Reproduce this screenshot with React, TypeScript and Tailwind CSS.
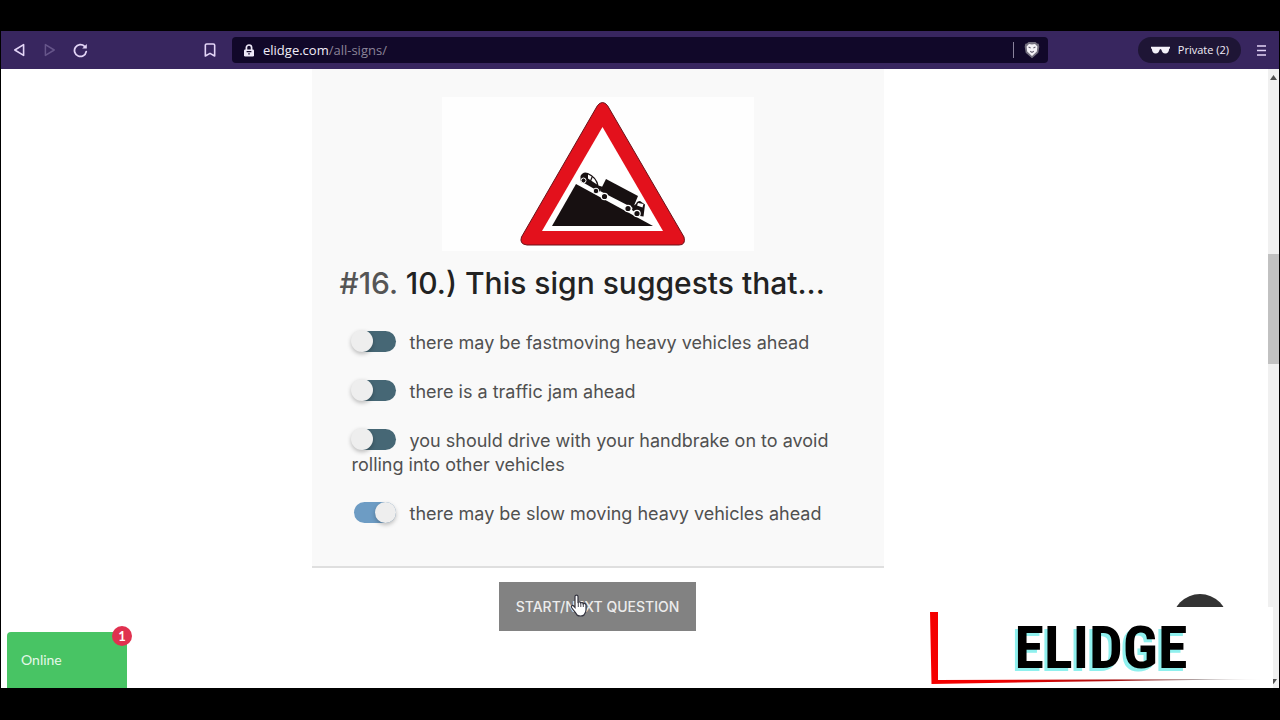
import { Bookmark } from "lucide-react";

const answers = [
  { id: "a1", text: "there may be fastmoving heavy vehicles ahead", checked: false },
  { id: "a2", text: "there is a traffic jam ahead", checked: false },
  {
    id: "a3",
    text: "you should drive with your handbrake on to avoid rolling into other vehicles",
    checked: false,
  },
  { id: "a4", text: "there may be slow moving heavy vehicles ahead", checked: true },
];

function Toolbar() {
  return (
    <header className="flex h-[38px] items-center bg-[#38265f] font-['Open_Sans','Noto_Sans',sans-serif] text-[#e3d5f7]">
      <nav className="flex flex-1 items-center pl-3">
        <button type="button" aria-label="Back" className="w-[31px]">
          <svg width="12" height="14" viewBox="0 0 12 14" fill="none" stroke="currentColor" strokeWidth="1.6" strokeLinejoin="round">
            <path d="M10.6 1.6v10.8L1.8 7z" />
          </svg>
        </button>
        <button type="button" aria-label="Forward" disabled className="w-[29px] text-[#66558a]">
          <svg width="12" height="14" viewBox="0 0 12 14" fill="none" stroke="currentColor" strokeWidth="1.5" strokeLinejoin="round">
            <path d="M1.4 1.6v10.8L10.2 7z" />
          </svg>
        </button>
        <button type="button" aria-label="Reload">
          <svg width="15" height="15" viewBox="0 0 15 15" fill="none" stroke="currentColor" strokeWidth="1.8" strokeLinecap="round">
            <path d="M13.2 8.6A5.9 5.9 0 1 1 11.6 3.4" />
            <path d="M9.2 5.6h4.6V1z" fill="currentColor" stroke="none" />
          </svg>
        </button>
        <button type="button" aria-label="Bookmark" className="ml-[114px]">
          <Bookmark className="h-4 w-4" strokeWidth={2.4} />
        </button>
        <div className="ml-3.5 flex h-[26px] flex-1 items-center rounded-sm bg-[#110829] pr-2 pl-[11px]">
          <svg width="12" height="13" viewBox="0 0 12 13" fill="none">
            <path d="M3.4 6V3.6a2.6 2.6 0 0 1 5.2 0V6" stroke="#eee9f8" strokeWidth="1.7" />
            <rect x="1" y="5.4" width="10" height="7" rx="1.2" fill="#eee9f8" />
            <path d="M3.6 7.6h4.8M5.2 9.8h1.6" stroke="#110829" strokeWidth="1.2" />
          </svg>
          <p className="ml-2 flex-1 text-[13px] leading-5 text-[#8b8498]">
            <span className="text-[#f1edf7]">elidge.com</span>/all-signs/
          </p>
          <div className="mr-2.5 h-4 w-px bg-[#8a829c]" />
          <svg width="16" height="18" viewBox="0 0 16 18">
            <path d="M4.5 1h7l1.6 1.5 1.6.2.6 3-1 6.1L8 17.2l-6.3-5.4-1-6.1.6-3 1.6-.2z" fill="#74707f" />
            <path d="M5 3l3 .6L11 3l2.4 2.4-.6 5L8 15l-4.8-4.600-.6-5z" fill="#f4f2f7" />
            <path d="M4.6 6.1l2 .8M11.4 6.1l-2 .8M6.2 10.2L8 11.4l1.8-1.2" stroke="#5f5a6b" strokeWidth="1.1" fill="none" />
          </svg>
        </div>
      </nav>
      <div className="ml-[90px] flex h-[26px] items-center gap-2 rounded-full bg-[#1e1535] pr-3 pl-[13px]">
        <svg width="19" height="9" viewBox="0 0 19 9" fill="#f4f1fa">
          <path d="M0 .8h19v1.4l-.9.7c0 2.700-1.400 4.600-3.800 4.600-2.200 0-3.400-1.500-3.900-3.800L9.500 3l-.9.7C8.100 6 6.900 7.500 4.700 7.500 2.300 7.500.9 5.600.9 2.900L0 2.200z" />
        </svg>
        <span className="text-[11px] leading-4 text-[#f1edf7]">Private (2)</span>
      </div>
      <button type="button" aria-label="Menu" className="mr-3 ml-[15px]">
        <svg width="11" height="13" viewBox="0 0 11 13" stroke="currentColor" strokeWidth="1.5">
          <path d="M1 2h9M1 6.5h9M1 11h9" />
        </svg>
      </button>
    </header>
  );
}

function SteepHillSign() {
  return (
    <svg width="312" height="154" viewBox="442 97 312 154" className="mx-auto bg-[#fefefe]" role="img" aria-label="Steep hill warning sign">
      <path
        d="M597.5 105.500Q602.500 99.500 607.500 105.500L684 237Q686 245 679 245H527Q519 244 521.500 237Z"
        fill="#e3111c"
        stroke="#6b1118"
        strokeWidth="1"
      />
      <path d="M602.5 127L663 231H542Z" fill="#fff" />
      <path d="M576 184L653 226H552Z" fill="#171011" />
      {/* truck and trailer */}
      <path d="M606 179L638 196L633 208L600 191Z" fill="#171011" />
      <path d="M636 204Q637 201 640 201L645 204.500L643.500 216.500L640 216L632 210L633 206Z" fill="#171011" />
      <path d="M638 203L643.500 204L642.500 207.500L637 205.500Z" fill="#fff" />
      <g fill="#171011" stroke="#fff" strokeWidth="1.2">
        <circle cx="604.5" cy="196.500" r="3.200" />
        <circle cx="628" cy="208.500" r="3.200" />
        <circle cx="637" cy="213.500" r="3.200" />
      </g>
      {/* car */}
      <path d="M580.5 176Q583 171 588 173Q597 177 598.500 185.500L603 187L599 192L594.500 189L580.500 181Z" fill="#171011" />
      <path d="M588 174.500Q595 177.500 597 184.500L588 178.500Z" fill="#fff" />
      <path d="M592.5 176L590.500 181" stroke="#171011" strokeWidth="1.2" />
      <g fill="#171011" stroke="#fff" strokeWidth="1">
        <circle cx="583.5" cy="180.500" r="2.500" />
        <circle cx="596" cy="191" r="2.800" />
      </g>
    </svg>
  );
}

function Question() {
  return (
    <section className="border-b-2 border-[#dfdfdf] bg-[#f9f9f9] px-7 pt-7 pb-10">
      <SteepHillSign />
      <h1 className="mt-3.5 text-[30px] leading-9 font-medium whitespace-nowrap text-[#222]">
        <span className="text-[#555]">#16.</span> 10.) This sign suggests that...
      </h1>
      <div className="mt-[30px] space-y-[25px] px-3">
        {answers.map((a) => (
          <label key={a.id} htmlFor={a.id} className="block text-lg leading-6 text-[#505050]">
            <input
              id={a.id}
              type="checkbox"
              defaultChecked={a.checked}
              className="relative mr-3.5 ml-0.5 inline-block h-[21px] w-[42px] appearance-none rounded-full bg-[#466775] align-[-3px] before:absolute before:-top-px before:-left-[3px] before:h-[22px] before:w-[22px] before:rounded-full before:bg-[#eeeeee] before:shadow-[0_2px_4px_rgba(0,0,0,0.25)] checked:bg-[#6d9cc4] checked:before:top-0 checked:before:left-[21px] checked:before:h-[21px] checked:before:w-[21px]"
            />
            {a.text}
          </label>
        ))}
      </div>
    </section>
  );
}

function HandCursor() {
  return (
    <svg width="18" height="24" viewBox="0 0 18 24" className="absolute top-3 left-[71px]">
      <path
        d="M5 2.5C5 .6 8 .6 8 2.5V9l.3-.8c.8-.8 2.200-.3 2.400.8.8-.8 2.300-.3 2.500.8.9-.7 2.800-.2 2.800 1.400V16c0 2-1.200 3.500-2 5-1.200 1.300-5.800 1.300-7 0C5.500 18 3 16 1.500 13.500c-.8-1.600 1-2.700 2.200-1.500L5 13.500z"
        fill="#fff"
        stroke="#33333f"
        strokeWidth="1.2"
      />
      <path d="M8.3 9v4M10.8 9.5V13M13.3 10v3" stroke="#33333f" strokeWidth=".9" />
    </svg>
  );
}

function Scrollbar() {
  return (
    <div className="flex w-[11px] flex-col items-center bg-[#f0f0f0] pt-1.5">
      <svg width="7" height="5" viewBox="0 0 7 5" fill="#505050">
        <path d="M3.5 0L7 5H0z" />
      </svg>
      <div className="mt-[174px] h-[110px] w-full bg-[#c1c1c1]" />
      <svg width="7" height="5" viewBox="0 0 7 5" fill="#505050" className="mt-auto mb-1">
        <path d="M3.5 5L7 0H0z" />
      </svg>
    </div>
  );
}

function Banner() {
  return (
    <div className="absolute right-1.5 bottom-0 flex h-[81px] w-[344px] items-center justify-center bg-white">
      <svg width="344" height="81" viewBox="0 0 344 81" className="absolute inset-0">
        <defs>
          <linearGradient id="stroke" x1="0" x2="1">
            <stop offset="0" stopColor="#f50000" />
            <stop offset=".2" stopColor="#f00000" />
            <stop offset=".55" stopColor="#a81010" />
            <stop offset=".8" stopColor="#998a8a" />
            <stop offset="1" stopColor="#fff" />
          </linearGradient>
        </defs>
        <path d="M1 5h8v68l327-1L120 75 2.500 77z" fill="url(#stroke)" />
      </svg>
      <span className="relative font-['Liberation_Sans_Narrow','Roboto_Condensed','Liberation_Sans',sans-serif] text-[60px] leading-none font-bold text-black [text-shadow:-3px_3px_0_#8ff0ee]">
        ELIDGE
      </span>
    </div>
  );
}

export default function App() {
  return (
    <div className="flex min-h-screen flex-col bg-black px-px pt-[31px] pb-8 font-['Inter',sans-serif]">
      <Toolbar />
      <div className="relative flex flex-1 overflow-hidden bg-white">
        <main className="flex flex-1 flex-col items-center pr-[74px] pb-12">
          <div className="w-full max-w-[572px]">
            <Question />
          </div>
          <button
            type="button"
            className="relative mt-3.5 h-[49px] bg-[#828282] px-[17px] text-sm font-medium text-[#ececec]"
          >
            START/NEXT QUESTION
            <HandCursor />
          </button>
        </main>
        <Scrollbar />

        <button
          type="button"
          className="absolute bottom-0 left-1.5 h-14 w-[120px] rounded-t bg-[#48c464] px-3.5 text-left font-['Lato',sans-serif] text-sm text-[#e4f8e8]"
        >
          Online
          <span className="absolute -top-1.5 -right-[5px] h-5 w-5 rounded-full bg-[#e0314f] text-center text-[13px] leading-5 font-bold text-white">
            1
          </span>
        </button>
        <button
          type="button"
          aria-label="Back to top"
          className="absolute right-[51px] bottom-[38px] h-14 w-14 rounded-full bg-[#333]"
        />
        <Banner />
      </div>
    </div>
  );
}
